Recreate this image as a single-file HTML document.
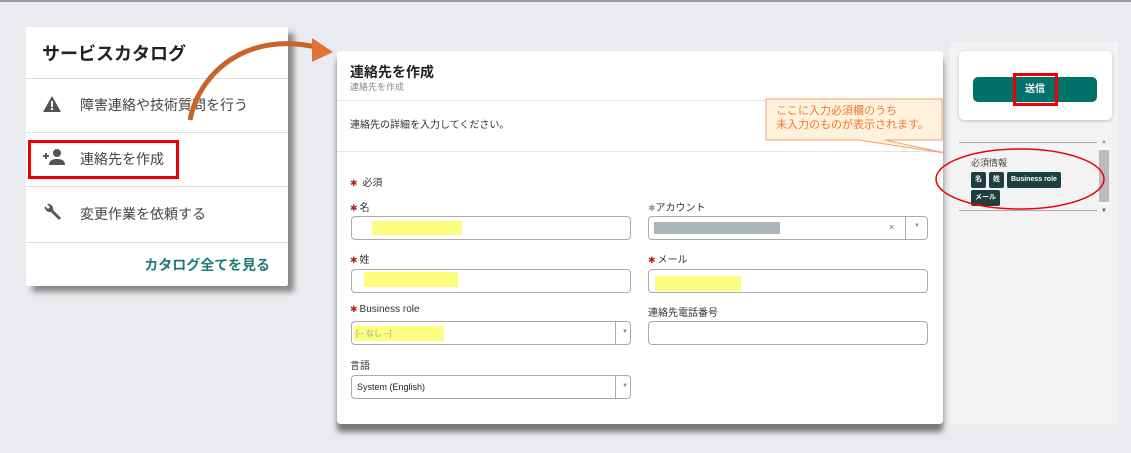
<!DOCTYPE html>
<html><head><meta charset="utf-8"><style>
*{box-sizing:border-box;margin:0;padding:0}
body{width:1131px;height:453px;background:#e9ebee;position:relative;overflow:hidden;font-family:"Liberation Sans","Noto Sans CJK JP",sans-serif;color:#333}
.a{position:absolute}
.lc{left:26px;top:27px;width:262px;height:259px;background:#fff;box-shadow:6px 6px 6px #888;border-radius:2px}
.div{position:absolute;height:1px;background:#ddd}
.it{position:absolute;left:54px;font-size:14px;color:#444}
.mc{left:337px;top:51px;width:606px;height:373px;background:#fff;border-radius:4px;box-shadow:0 8px 6px #777}
.lab{position:absolute;font-size:10px;color:#333}
.st{color:#b22;font-size:9px;margin-right:2px}
.inp{position:absolute;height:24px;border:1px solid #aaa;border-radius:4px;background:#fff}
.hl{position:absolute;background:#fdfd80}
.tag{display:inline-block;background:#1e3e40;color:#fff;font-size:7px;font-weight:bold;padding:1px 4px;border-radius:2px;margin-right:3px}
</style></head><body>
<div class="a" style="left:0;top:0;width:1131px;height:2px;background:#999"></div>
<div class="a" style="left:1118px;top:2px;width:13px;height:451px;background:#e9ebee"></div>

<div class="a lc">
 <div class="a" style="left:16px;top:13px;font-size:18px;font-weight:bold;color:#222">サービスカタログ</div>
 <div class="div" style="left:0;right:0;top:51px"></div>
 <svg class="a" style="left:16px;top:68px" width="20" height="18" viewBox="0 0 20 18"><path d="M10 1L19 17H1Z" fill="#555"/><rect x="9" y="6" width="2" height="6" fill="#fff"/><rect x="9" y="13" width="2" height="2" fill="#fff"/></svg>
 <div class="it" style="top:68px">障害連絡や技術質問を行う</div>
 <div class="div" style="left:0;right:0;top:105px"></div>
 <div class="a" style="left:2px;top:113px;width:151px;height:39px;border:3px solid #e00"></div>
 <svg class="a" style="left:16px;top:121px" width="24" height="18" viewBox="0 0 24 18"><path d="M1 8h6M4 5v6" stroke="#555" stroke-width="2"/><circle cx="15" cy="5" r="4" fill="#555"/><path d="M7 17c0-5 4-6 8-6s8 1 8 6z" fill="#555"/></svg>
 <div class="it" style="top:122px">連絡先を作成</div>
 <div class="div" style="left:0;right:0;top:159px"></div>
 <svg class="a" style="left:16px;top:176px" width="20" height="20" viewBox="0 0 20 20"><path d="M3 3a5 5 0 0 0 6 6l8 8 2-2-8-8a5 5 0 0 0-6-6l3 3-2 2z" fill="#555"/></svg>
 <div class="it" style="top:177px">変更作業を依頼する</div>
 <div class="div" style="left:0;right:0;top:215px"></div>
 <div class="a" style="right:18px;top:228px;font-size:14px;font-weight:bold;color:#1e7b78">カタログ全てを見る</div>
</div>

<svg class="a" style="left:0;top:0" width="360" height="140"><path d="M190 120C200 70 250 30 320 48" fill="none" stroke="#c8632a" stroke-width="5"/><path d="M312 38L333 52 312 62Z" fill="#e0733a"/></svg>

<div class="a mc">
 <div class="a" style="left:13px;top:11px;font-size:14px;font-weight:bold;color:#222">連絡先を作成</div>
 <div class="a" style="left:13px;top:29px;font-size:9px;color:#888">連絡先を作成</div>
 <div class="div" style="left:0;right:0;top:49px;background:#e5e5e5"></div>
 <div class="a" style="left:13px;top:65px;font-size:10px;color:#333">連絡先の詳細を入力してください。</div>
 <div class="div" style="left:0;right:0;top:100px;background:#e5e5e5"></div>
 <div class="lab" style="left:13px;top:123px"><span class="st">✱</span> 必須</div>
 <div class="lab" style="left:13px;top:148px"><span class="st">✱</span>名</div>
 <div class="inp" style="left:14px;top:165px;width:280px"></div><div class="hl" style="left:35px;top:170px;width:90px;height:14px"></div>
 <div class="lab" style="left:311px;top:148px"><span style="color:#999;font-size:9px">✱</span>アカウント</div>
 <div class="inp" style="left:311px;top:165px;width:280px"><div class="a" style="left:5px;top:5px;width:126px;height:12px;background:#a9b6be"></div><div class="a" style="left:240px;top:5px;font-size:9px;color:#666">×</div><div class="a" style="left:256px;top:0;width:1px;height:22px;background:#aaa"></div><div class="a" style="left:265px;top:6px;font-size:6px;color:#888">▼</div></div>
 <div class="lab" style="left:13px;top:200px"><span class="st">✱</span>姓</div>
 <div class="inp" style="left:14px;top:218px;width:280px"></div><div class="hl" style="left:27px;top:221px;width:94px;height:15px"></div>
 <div class="lab" style="left:311px;top:200px"><span class="st">✱</span>メール</div>
 <div class="inp" style="left:311px;top:218px;width:280px"></div><div class="hl" style="left:318px;top:225px;width:86px;height:15px"></div>
 <div class="lab" style="left:13px;top:253px"><span class="st">✱</span>Business role</div>
 <div class="inp" style="left:14px;top:270px;width:280px"><div class="a" style="left:263px;top:0;width:1px;height:22px;background:#aaa"></div><div class="a" style="left:270px;top:7px;font-size:6px;color:#888">▼</div></div>
 <div class="hl" style="left:17px;top:275px;width:90px;height:15px"></div><div class="a" style="left:19px;top:277px;font-size:8px;color:#999">[-- なし --]</div>
 <div class="lab" style="left:311px;top:253px">連絡先電話番号</div>
 <div class="inp" style="left:311px;top:270px;width:280px"></div>
 <div class="lab" style="left:13px;top:306px">言語</div>
 <div class="inp" style="left:14px;top:324px;width:280px"><div class="a" style="left:5px;top:6px;font-size:9px;color:#222">System (English)</div><div class="a" style="left:263px;top:0;width:1px;height:22px;background:#aaa"></div><div class="a" style="left:270px;top:7px;font-size:6px;color:#888">▼</div></div>
</div>

<div class="a" style="left:950px;top:42px;width:168px;height:382px;background:#f3f3f3"></div>
<div class="a" style="left:959px;top:51px;width:153px;height:69px;background:#fff;border-radius:5px;box-shadow:0 1px 3px #bbb"></div>
<div class="a" style="left:973px;top:77px;width:124px;height:25px;background:#00716b;border-radius:5px;color:#fff;font-size:10px;font-weight:bold;text-align:center;line-height:25px">送信</div>
<div class="a" style="left:1013px;top:73px;width:45px;height:33px;border:3px solid #e00"></div>
<div class="a" style="left:959px;top:142px;width:138px;height:1px;background:#aab"></div>
<div class="a" style="left:959px;top:210px;width:138px;height:1px;background:#aab"></div>
<div class="a" style="left:1099px;top:150px;width:10px;height:52px;background:#bbb"></div>
<div class="a" style="left:1101px;top:139px;font-size:6px;color:#999">▲</div>
<div class="a" style="left:1101px;top:208px;font-size:6px;color:#555">▼</div>
<div class="a" style="left:971px;top:156px;font-size:9px;color:#444">必須情報</div>
<div class="a" style="left:971px;top:170px;line-height:14px;width:130px"><span class="tag">名</span><span class="tag">姓</span><span class="tag">Business role</span><br><span class="tag">メール</span></div>

<svg class="a" style="left:760px;top:95px" width="360" height="130"><path d="M6 4H182V45H125L185 58 98 45H6Z" fill="#fff2dc" stroke="#f4a070"/><ellipse cx="260" cy="84" rx="84" ry="30" fill="none" stroke="#e00" stroke-width="1.5"/></svg>
<div class="a" style="left:776px;top:104px;font-size:11px;color:#f07a30;line-height:14px">ここに入力必須欄のうち<br>未入力のものが表示されます。</div>
</body></html>
